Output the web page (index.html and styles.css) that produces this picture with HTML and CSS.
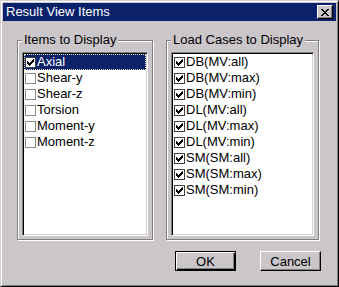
FILE: index.html
```html
<!DOCTYPE html>
<html>
<head>
<meta charset="utf-8">
<link rel="stylesheet" href="styles.css">
</head>
<body>
<div class="window">
  <div class="titlebar">
    <span class="title">Result View Items</span>
    <button class="close" type="button" aria-label="Close">
      <svg width="8" height="7" viewBox="0 0 8 7" shape-rendering="crispEdges"><path fill="#000" d="M0 0h2v1h-2zM6 0h2v1h-2zM1 1h2v1h-2zM5 1h2v1h-2zM2 2h4v1h-4zM3 3h2v1h-2zM2 4h4v1h-4zM1 5h2v1h-2zM5 5h2v1h-2zM0 6h2v1h-2zM6 6h2v1h-2z"/></svg>
    </button>
  </div>
  <div class="content">
    <div class="groups">
      <fieldset class="group group-items">
        <legend>Items to Display</legend>
        <ul class="list">
          <li class="row selected"><span class="cb checked"><svg width="7" height="7" viewBox="0 0 7 7" shape-rendering="crispEdges"><path d="M6 0h1v1h-1zM5 1h2v1h-2zM0 2h1v1h-1zM4 2h3v1h-3zM0 3h2v1h-2zM3 3h3v1h-3zM0 4h5v1h-5zM1 5h3v1h-3zM2 6h1v1h-1z"/></svg></span><span class="lbl">Axial</span></li>
          <li class="row"><span class="cb"></span><span class="lbl">Shear-y</span></li>
          <li class="row"><span class="cb"></span><span class="lbl">Shear-z</span></li>
          <li class="row"><span class="cb"></span><span class="lbl">Torsion</span></li>
          <li class="row"><span class="cb"></span><span class="lbl">Moment-y</span></li>
          <li class="row"><span class="cb"></span><span class="lbl">Moment-z</span></li>
        </ul>
      </fieldset>
      <fieldset class="group group-cases">
        <legend>Load Cases to Display</legend>
        <ul class="list">
          <li class="row"><span class="cb checked"><svg width="7" height="7" viewBox="0 0 7 7" shape-rendering="crispEdges"><path d="M6 0h1v1h-1zM5 1h2v1h-2zM0 2h1v1h-1zM4 2h3v1h-3zM0 3h2v1h-2zM3 3h3v1h-3zM0 4h5v1h-5zM1 5h3v1h-3zM2 6h1v1h-1z"/></svg></span><span class="lbl">DB(MV:all)</span></li>
          <li class="row"><span class="cb checked"><svg width="7" height="7" viewBox="0 0 7 7" shape-rendering="crispEdges"><path d="M6 0h1v1h-1zM5 1h2v1h-2zM0 2h1v1h-1zM4 2h3v1h-3zM0 3h2v1h-2zM3 3h3v1h-3zM0 4h5v1h-5zM1 5h3v1h-3zM2 6h1v1h-1z"/></svg></span><span class="lbl">DB(MV:max)</span></li>
          <li class="row"><span class="cb checked"><svg width="7" height="7" viewBox="0 0 7 7" shape-rendering="crispEdges"><path d="M6 0h1v1h-1zM5 1h2v1h-2zM0 2h1v1h-1zM4 2h3v1h-3zM0 3h2v1h-2zM3 3h3v1h-3zM0 4h5v1h-5zM1 5h3v1h-3zM2 6h1v1h-1z"/></svg></span><span class="lbl">DB(MV:min)</span></li>
          <li class="row"><span class="cb checked"><svg width="7" height="7" viewBox="0 0 7 7" shape-rendering="crispEdges"><path d="M6 0h1v1h-1zM5 1h2v1h-2zM0 2h1v1h-1zM4 2h3v1h-3zM0 3h2v1h-2zM3 3h3v1h-3zM0 4h5v1h-5zM1 5h3v1h-3zM2 6h1v1h-1z"/></svg></span><span class="lbl">DL(MV:all)</span></li>
          <li class="row"><span class="cb checked"><svg width="7" height="7" viewBox="0 0 7 7" shape-rendering="crispEdges"><path d="M6 0h1v1h-1zM5 1h2v1h-2zM0 2h1v1h-1zM4 2h3v1h-3zM0 3h2v1h-2zM3 3h3v1h-3zM0 4h5v1h-5zM1 5h3v1h-3zM2 6h1v1h-1z"/></svg></span><span class="lbl">DL(MV:max)</span></li>
          <li class="row"><span class="cb checked"><svg width="7" height="7" viewBox="0 0 7 7" shape-rendering="crispEdges"><path d="M6 0h1v1h-1zM5 1h2v1h-2zM0 2h1v1h-1zM4 2h3v1h-3zM0 3h2v1h-2zM3 3h3v1h-3zM0 4h5v1h-5zM1 5h3v1h-3zM2 6h1v1h-1z"/></svg></span><span class="lbl">DL(MV:min)</span></li>
          <li class="row"><span class="cb checked"><svg width="7" height="7" viewBox="0 0 7 7" shape-rendering="crispEdges"><path d="M6 0h1v1h-1zM5 1h2v1h-2zM0 2h1v1h-1zM4 2h3v1h-3zM0 3h2v1h-2zM3 3h3v1h-3zM0 4h5v1h-5zM1 5h3v1h-3zM2 6h1v1h-1z"/></svg></span><span class="lbl">SM(SM:all)</span></li>
          <li class="row"><span class="cb checked"><svg width="7" height="7" viewBox="0 0 7 7" shape-rendering="crispEdges"><path d="M6 0h1v1h-1zM5 1h2v1h-2zM0 2h1v1h-1zM4 2h3v1h-3zM0 3h2v1h-2zM3 3h3v1h-3zM0 4h5v1h-5zM1 5h3v1h-3zM2 6h1v1h-1z"/></svg></span><span class="lbl">SM(SM:max)</span></li>
          <li class="row"><span class="cb checked"><svg width="7" height="7" viewBox="0 0 7 7" shape-rendering="crispEdges"><path d="M6 0h1v1h-1zM5 1h2v1h-2zM0 2h1v1h-1zM4 2h3v1h-3zM0 3h2v1h-2zM3 3h3v1h-3zM0 4h5v1h-5zM1 5h3v1h-3zM2 6h1v1h-1z"/></svg></span><span class="lbl">SM(SM:min)</span></li>
        </ul>
      </fieldset>
    </div>
    <div class="buttons">
      <button class="btn btn-default" type="button">OK</button>
      <button class="btn" type="button">Cancel</button>
    </div>
  </div>
</div>
</body>
</html>
```
FILE: styles.css
```css
html, body {
  margin: 0;
  padding: 0;
  background: #cac6ca;
}

body {
  font-family: "Liberation Sans", Arial, sans-serif;
  font-size: 13px;
  color: #000;
}

.window {
  width: 339px;
  height: 287px;
  box-sizing: border-box;
  border: 1px solid;
  border-color: #d4d0d4 #000 #000 #d4d0d4;
  box-shadow: inset 1px 1px #fff, inset -1px -1px #808080;
  padding: 2px;
  background: #cac6ca;
  display: flex;
  flex-direction: column;
}

.titlebar {
  height: 18px;
  flex: none;
  background: #0b226b;
  color: #fff;
  display: flex;
  align-items: center;
  justify-content: space-between;
  padding: 0 3px 0 3px;
}

.title {
  line-height: 18px;
  white-space: nowrap;
}

.close {
  width: 16px;
  height: 14px;
  box-sizing: border-box;
  padding: 0;
  margin: 0;
  background: #cac6ca;
  border: 1px solid;
  border-color: #fff #000 #000 #fff;
  box-shadow: inset -1px -1px #808080;
  display: flex;
  align-items: center;
  justify-content: center;
}

.close svg {
  display: block;
}

.content {
  flex: 1;
  padding: 12px 15px 0 14px;
  display: flex;
  flex-direction: column;
}

.groups {
  display: flex;
  gap: 13px;
}

.group {
  margin: 0;
  padding: 5px 4px 3px 4px;
  min-width: 0;
  border: 1px solid #808080;
  box-shadow: inset 1px 1px #fff, 1px 1px #fff;
  box-sizing: border-box;
}

.group-items {
  width: 136px;
}

.group-cases {
  width: 153px;
}

.group legend {
  padding: 0 2px;
  margin: 0;
  line-height: 14px;
  background: #cac6ca;
  white-space: nowrap;
}

.list {
  list-style: none;
  margin: 0;
  padding: 1px;
  height: 184px;
  box-sizing: border-box;
  background: #fff;
  border: 1px solid;
  border-color: #808080 #fff #fff #808080;
  box-shadow: inset 1px 1px #000, inset -1px -1px #d4d0d4;
  overflow: hidden;
}

.row {
  display: flex;
  align-items: center;
  height: 16px;
  padding-left: 1px;
  white-space: nowrap;
}

.row.selected {
  background: #0b226b;
  color: #fff;
  outline: 1px dotted #e8e8d0;
  outline-offset: -1px;
}

.cb {
  width: 11px;
  height: 11px;
  flex: none;
  box-sizing: border-box;
  border: 1px solid #8a8a8a;
  background: #fff;
  margin-right: 1px;
  display: flex;
  align-items: center;
  justify-content: center;
}

.cb.checked {
  border-color: #404040;
}

.cb svg {
  display: block;
  fill: #000;
}

.lbl {
  line-height: 16px;
}

.buttons {
  display: flex;
  justify-content: flex-end;
  gap: 24px;
  margin-top: 11px;
}

.btn {
  width: 61px;
  height: 20px;
  box-sizing: border-box;
  margin: 0;
  padding: 0;
  font-family: "Liberation Sans", Arial, sans-serif;
  font-size: 13px;
  color: #000;
  background: #cac6ca;
  border: 1px solid;
  border-color: #fff #000 #000 #fff;
  box-shadow: inset -1px -1px #808080;
}

.btn-default {
  border-color: #000;
  box-shadow: inset 1px 1px #fff, inset -1px -1px #000, inset -2px -2px #808080;
}
```
